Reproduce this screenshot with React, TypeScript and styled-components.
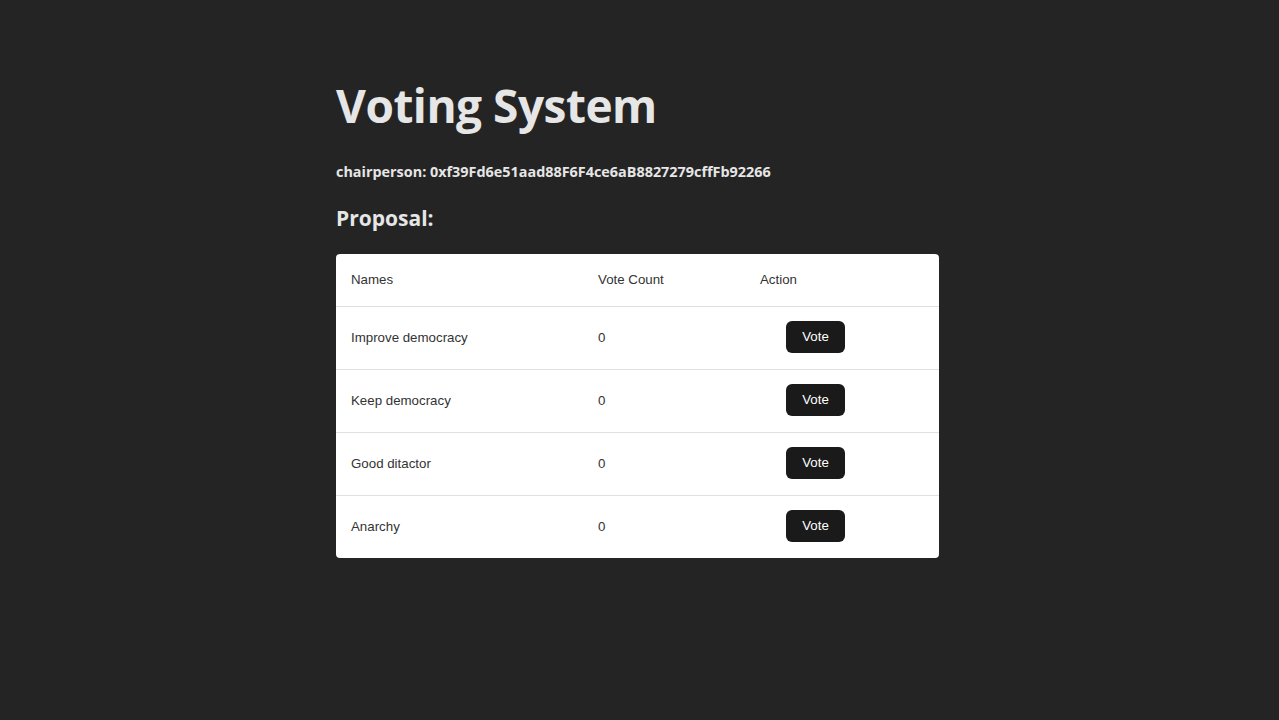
import React from 'react'
import styled, { createGlobalStyle } from 'styled-components'

const GlobalStyle = createGlobalStyle`
  html, body {
    margin: 0;
    padding: 0;
    background: #242424;
  }
  body {
    min-height: 720px;
    font-family: "Open Sans", "Noto Sans", sans-serif;
    color: rgba(255, 255, 255, 0.87);
  }
`

const proposals = [
  { name: 'Improve democracy', votes: 0 },
  { name: 'Keep democracy', votes: 0 },
  { name: 'Good ditactor', votes: 0 },
  { name: 'Anarchy', votes: 0 },
]

const Page = styled.main`
  width: 607px;
  margin: 0 auto;
  padding-top: 73px;
`

const Title = styled.h1`
  margin: 0;
  font-size: 46px;
  line-height: 64px;
  font-weight: 700;
  letter-spacing: -0.5px;
  color: #e6e6e6;
`

const Chairperson = styled.p`
  margin: 25px 0 0;
  font-size: 14.4px;
  line-height: 20px;
  font-weight: 700;
  color: #e6e6e6;
`

const SubTitle = styled.h2`
  margin: 20px 0 0;
  font-size: 21px;
  line-height: 32px;
  font-weight: 700;
  color: #e6e6e6;
`

const Card = styled.div`
  margin-top: 20px;
  width: 603px;
  background: #fff;
  border-radius: 4px;
  overflow: hidden;
`

const Table = styled.table`
  width: 100%;
  table-layout: fixed;
  border-collapse: collapse;
  font-family: "Liberation Sans", Arial, sans-serif;
  font-size: 13.3px;
  color: #333;
`

// widths are content widths; each cell adds 15px padding on both sides
const HeadCell = styled.th<{ $width?: number }>`
  width: ${(p) => (p.$width ? `${p.$width}px` : 'auto')};
  height: 50px;
  padding: 0 15px 2px;
  text-align: left;
  font-weight: 400;
  border-bottom: 1px solid #e0e0e0;
`

const Row = styled.tr`
  &:not(:last-child) td {
    border-bottom: 1px solid #e0e0e0;
  }
`

const Cell = styled.td<{ $center?: boolean }>`
  height: 60px;
  padding: 0 15px 2px;
  text-align: ${(p) => (p.$center ? 'center' : 'left')};
`

const VoteButton = styled.button`
  height: 32px;
  width: 59px;
  padding: 0 0 1px;
  border: none;
  border-radius: 6px;
  background: #1a1a1a;
  color: #fff;
  font-family: "Liberation Sans", Arial, sans-serif;
  font-size: 13.3px;
  cursor: pointer;
`

export default function App() {
  return (
    <>
      <GlobalStyle />
      <Page>
        <Title>Voting System</Title>
        <Chairperson>chairperson: 0xf39Fd6e51aad88F6F4ce6aB8827279cffFb92266</Chairperson>
        <SubTitle>Proposal:</SubTitle>
        <Card>
          <Table>
            <thead>
              <tr>
                <HeadCell $width={217}>Names</HeadCell>
                <HeadCell $width={132}>Vote Count</HeadCell>
                <HeadCell $width={111}>Action</HeadCell>
                <HeadCell />
              </tr>
            </thead>
            <tbody>
              {proposals.map((p) => (
                <Row key={p.name}>
                  <Cell>{p.name}</Cell>
                  <Cell>{p.votes}</Cell>
                  <Cell $center>
                    <VoteButton>Vote</VoteButton>
                  </Cell>
                  <Cell />
                </Row>
              ))}
            </tbody>
          </Table>
        </Card>
      </Page>
    </>
  )
}
